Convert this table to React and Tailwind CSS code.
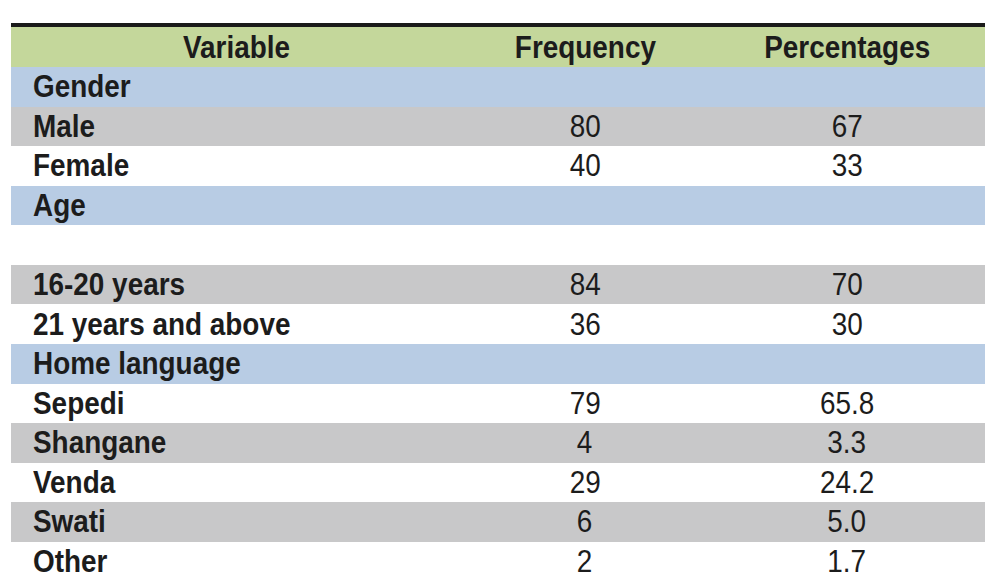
import React from 'react';

const rows = [
  { label: 'Gender', kind: 'section' },
  { label: 'Male', freq: '80', pct: '67', kind: 'gray' },
  { label: 'Female', freq: '40', pct: '33', kind: 'white' },
  { label: 'Age', kind: 'section' },
  { label: '', kind: 'white' },
  { label: '16-20 years', freq: '84', pct: '70', kind: 'gray' },
  { label: '21 years and above', freq: '36', pct: '30', kind: 'white' },
  { label: 'Home language', kind: 'section' },
  { label: 'Sepedi', freq: '79', pct: '65.8', kind: 'white' },
  { label: 'Shangane', freq: '4', pct: '3.3', kind: 'gray' },
  { label: 'Venda', freq: '29', pct: '24.2', kind: 'white' },
  { label: 'Swati', freq: '6', pct: '5.0', kind: 'gray' },
  { label: 'Other', freq: '2', pct: '1.7', kind: 'white' },
];

const bg = {
  section: 'bg-[#b8cce4]',
  gray: 'bg-[#c8c8c9]',
  white: 'bg-white',
};

// narrow look: Liberation Sans squeezed horizontally
function Narrow({ children, left }) {
  return (
    <span className={`inline-block whitespace-nowrap scale-x-[0.9] ${left ? 'origin-left' : 'origin-center'}`}>
      {children}
    </span>
  );
}

export default function App() {
  return (
    <div className="w-[990px] h-[582px] bg-white pt-[23px] pl-[11px] overflow-hidden font-['Liberation_Sans',Arial,sans-serif] text-[#1c1c1c]">
      <div className="w-[974px] border-t-4 border-[#1a1a1a]">
        {/* header */}
        <div className="grid grid-cols-[450px_248px_276px] h-[40px] items-center bg-[#c4d79b] text-[31px] leading-none font-bold">
          <div className="text-center"><Narrow>Variable</Narrow></div>
          <div className="text-center"><Narrow>Frequency</Narrow></div>
          <div className="text-center"><Narrow>Percentages</Narrow></div>
        </div>

        {rows.map((r, i) => (
          <div
            key={i}
            className={`grid grid-cols-[450px_248px_276px] h-[39.57px] items-center text-[31px] leading-none ${bg[r.kind]}`}
          >
            <div className="pl-[22px] font-bold"><Narrow left>{r.label}</Narrow></div>
            <div className="text-center"><Narrow>{r.freq}</Narrow></div>
            <div className="text-center"><Narrow>{r.pct}</Narrow></div>
          </div>
        ))}
      </div>
    </div>
  );
}
